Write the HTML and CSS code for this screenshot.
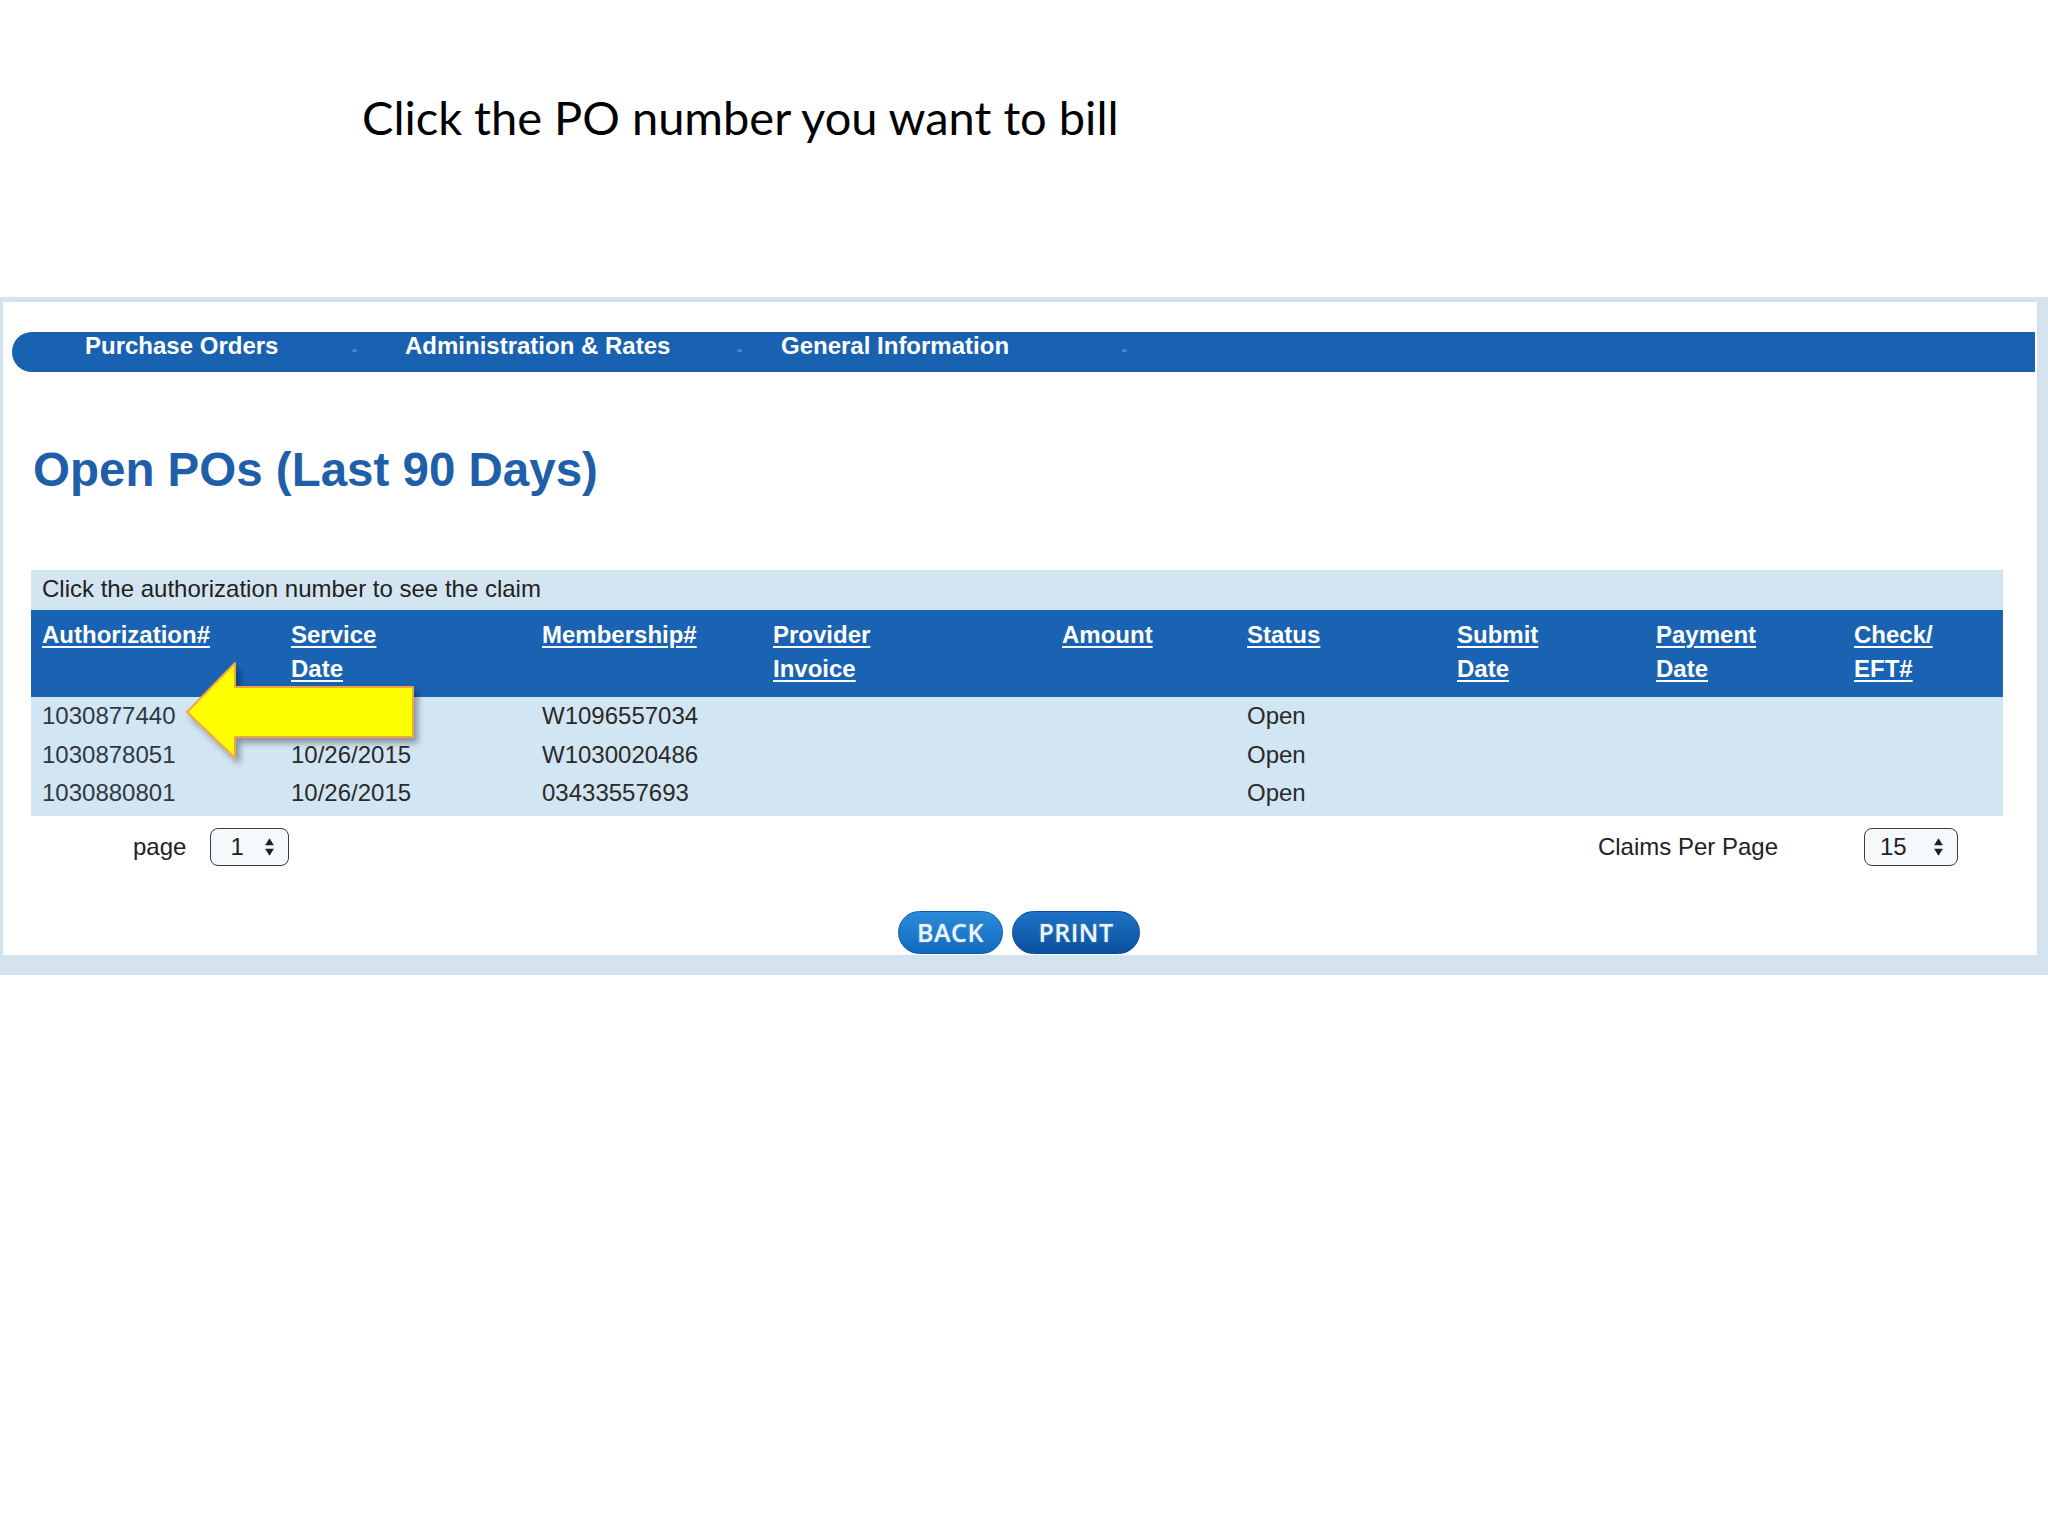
FILE: index.html
```html
<!DOCTYPE html>
<html lang="en">
<head>
<meta charset="utf-8">
<title>Open POs</title>
<link rel="stylesheet" href="styles.css">
</head>
<body>
<div class="slide">
  <h1 class="slide-title">Click the PO number you want to bill</h1>
  <div class="shot">
    <div class="shot-inner">
      <nav class="nav">
        <div class="nav-item w1"><span>Purchase Orders</span><i class="dot"></i></div>
        <div class="nav-item w2"><span>Administration &amp; Rates</span><i class="dot"></i></div>
        <div class="nav-item w3"><span>General Information</span><i class="dot"></i></div>
      </nav>
      <h2 class="heading">Open POs (Last 90 Days)</h2>
      <div class="claims">
        <div class="caption">Click the authorization number to see the claim</div>
        <div class="cols head">
          <span><a>Authorization#</a></span>
          <span><a>Service<br>Date</a></span>
          <span><a>Membership#</a></span>
          <span><a>Provider<br>Invoice</a></span>
          <span><a>Amount</a></span>
          <span><a>Status</a></span>
          <span><a>Submit<br>Date</a></span>
          <span><a>Payment<br>Date</a></span>
          <span><a>Check/<br>EFT#</a></span>
        </div>
        <div class="rows">
          <div class="cols row">
            <span class="auth">1030877440</span><span></span><span>W1096557034</span><span></span><span></span><span>Open</span><span></span><span></span><span></span>
          </div>
          <div class="cols row">
            <span class="auth">1030878051</span><span>10/26/2015</span><span>W1030020486</span><span></span><span></span><span>Open</span><span></span><span></span><span></span>
          </div>
          <div class="cols row">
            <span class="auth">1030880801</span><span>10/26/2015</span><span>03433557693</span><span></span><span></span><span>Open</span><span></span><span></span><span></span>
          </div>
        </div>
        <svg class="pointer" viewBox="0 0 250 115" width="250" height="115">
          <defs>
            <filter id="sh" x="-10%" y="-10%" width="130%" height="140%">
              <feDropShadow dx="4" dy="5" stdDeviation="3" flood-color="#000" flood-opacity="0.35"/>
            </filter>
          </defs>
          <polygon points="6,57 54,8 54,32 232,32 232,82 54,82 54,103" fill="#ffff00" stroke="#f0a640" stroke-width="2" stroke-linejoin="round" filter="url(#sh)"/>
        </svg>
      </div>
      <div class="pager">
        <span class="pager-label">page</span>
        <div class="select small"><span>1</span>
          <svg class="spin" viewBox="0 0 10 18" width="11" height="20"><polygon points="1,7.5 5,1 9,7.5" /><polygon points="1,10.5 5,17 9,10.5" /></svg>
        </div>
        <div class="pager-right">
          <span class="pager-label">Claims Per Page</span>
          <div class="select wide"><span>15</span>
            <svg class="spin" viewBox="0 0 10 18" width="11" height="20"><polygon points="1,7.5 5,1 9,7.5" /><polygon points="1,10.5 5,17 9,10.5" /></svg>
          </div>
        </div>
      </div>
      <div class="actions">
        <a class="btn btn-back">BACK</a>
        <a class="btn btn-print">PRINT</a>
      </div>
    </div>
  </div>
</div>
</body>
</html>
```

FILE: styles.css
```css
* { box-sizing: border-box; }

body {
  margin: 0;
  background: #ffffff;
  font-family: "Liberation Sans", Arial, sans-serif;
}

.slide {
  width: 2048px;
  height: 1536px;
}

.slide-title {
  margin: 0;
  padding: 89px 0 0 362px;
  font-family: Lato, "Open Sans", sans-serif;
  font-weight: 400;
  font-size: 47px;
  line-height: 56px;
  color: #000;
}

.shot {
  margin-top: 152px;
  background: #d3e4f0;
  padding: 5px 11px 20px 3px;
}

.shot-inner {
  background: #ffffff;
  height: 653px;
  padding: 30px 2px 2px 0;
}

.nav {
  margin-left: 9px;
  height: 40px;
  background: #1961b1;
  border-radius: 20px 0 0 20px;
  display: flex;
  padding-left: 73px;
}

.nav-item {
  display: flex;
  align-items: center;
  justify-content: space-between;
  height: 28px;
  color: #fff;
  font-weight: 700;
  font-size: 24px;
}
.nav-item.w1 { width: 320px; padding-right: 48px; }
.nav-item.w2 { width: 376px; padding-right: 39px; }
.nav-item.w3 { width: 390px; padding-right: 44px; }

.dot {
  display: block;
  width: 5px;
  height: 3px;
  margin-top: 8px;
  border-radius: 2px;
  background: #3f88d2;
}

.heading {
  margin: 70px 0 0 30px;
  font-size: 47.5px;
  line-height: 55px;
  font-weight: 700;
  color: #1f5fa9;
}

.claims {
  position: relative;
  margin: 73px 0 0 28px;
  width: 1972px;
  font-size: 24px;
  color: #2a2a2a;
}

.caption {
  height: 40px;
  line-height: 38px;
  padding-left: 11px;
  background: #d4e5f2;
  color: #222;
}

.cols {
  display: grid;
  grid-template-columns: 249px 251px 231px 289px 185px 210px 199px 198px 1fr;
}
.cols > span { padding-left: 11px; }

.head {
  height: 87px;
  padding-top: 8px;
  background: #1a63b3;
}
.head a {
  color: #fff;
  font-weight: 700;
  line-height: 34px;
  text-decoration: underline;
  text-decoration-thickness: 2px;
  text-underline-offset: 3px;
}

.rows {
  background: #d2e5f3;
  padding-bottom: 3px;
}
.row {
  height: 38.5px;
  line-height: 38px;
}
.auth { color: #2f3844; }

.pointer {
  position: absolute;
  left: 150px;
  top: 85px;
  overflow: visible;
}

.pager {
  display: flex;
  align-items: center;
  margin: 12px 0 0 28px;
  width: 1972px;
  height: 38px;
  padding: 0 45px 0 102px;
  font-size: 24px;
  color: #222;
}

.pager-right {
  margin-left: auto;
  display: flex;
  align-items: center;
}

.select {
  display: flex;
  align-items: center;
  justify-content: space-between;
  height: 38px;
  border: 1.5px solid #3a3a3a;
  border-radius: 8px;
  background: #f5f9fc;
  font-size: 24px;
  color: #222;
}
.select.small { width: 79px; margin-left: 24px; padding: 0 13px 0 19px; }
.select.wide { width: 94px; margin-left: 86px; padding: 0 13px 0 15px; }
.spin polygon { fill: #222; }

.actions {
  display: flex;
  justify-content: center;
  gap: 9px;
  margin-top: 45px;
}

.btn {
  display: block;
  height: 43px;
  border-radius: 22px;
  color: #eef6ff;
  font-family: "Open Sans", sans-serif;
  font-weight: 600;
  font-size: 25px;
  line-height: 41px;
  text-align: center;
  letter-spacing: 0.5px;
  text-shadow: 0 0 2px rgba(255,255,255,0.35);
}
.btn-back {
  width: 105px;
  background: linear-gradient(#2c8cd9, #1069be);
  border: 1px solid #0d5aa8;
}
.btn-print {
  width: 128px;
  background: linear-gradient(#1e72c6, #0a509e);
  border: 1px solid #0a4a92;
}
```
